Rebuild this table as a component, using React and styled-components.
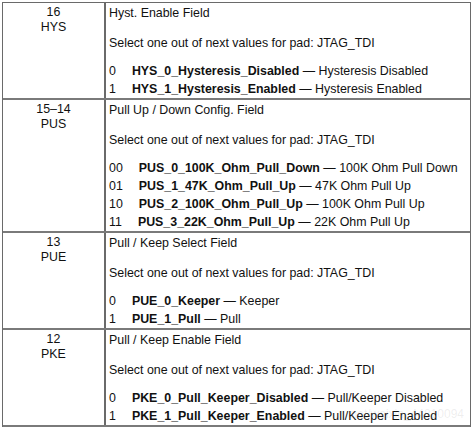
import React from 'react';
import styled, { createGlobalStyle } from 'styled-components';

const fields = [
  {
    bits: '16',
    name: 'HYS',
    title: 'Hyst. Enable Field',
    values: [
      { code: '0', key: 'HYS_0_Hysteresis_Disabled', desc: 'Hysteresis Disabled' },
      { code: '1', key: 'HYS_1_Hysteresis_Enabled', desc: 'Hysteresis Enabled' },
    ],
  },
  {
    bits: '15–14',
    name: 'PUS',
    title: 'Pull Up / Down Config. Field',
    values: [
      { code: '00', key: 'PUS_0_100K_Ohm_Pull_Down', desc: '100K Ohm Pull Down' },
      { code: '01', key: 'PUS_1_47K_Ohm_Pull_Up', desc: '47K Ohm Pull Up' },
      { code: '10', key: 'PUS_2_100K_Ohm_Pull_Up', desc: '100K Ohm Pull Up' },
      { code: '11', key: 'PUS_3_22K_Ohm_Pull_Up', desc: '22K Ohm Pull Up' },
    ],
  },
  {
    bits: '13',
    name: 'PUE',
    title: 'Pull / Keep Select Field',
    values: [
      { code: '0', key: 'PUE_0_Keeper', desc: 'Keeper' },
      { code: '1', key: 'PUE_1_Pull', desc: 'Pull' },
    ],
  },
  {
    bits: '12',
    name: 'PKE',
    title: 'Pull / Keep Enable Field',
    values: [
      { code: '0', key: 'PKE_0_Pull_Keeper_Disabled', desc: 'Pull/Keeper Disabled' },
      { code: '1', key: 'PKE_1_Pull_Keeper_Enabled', desc: 'Pull/Keeper Enabled' },
    ],
  },
];

export default function App() {
  return (
    <>
      <GlobalStyle />
      <Table>
        {fields.map((f) => (
          <Row key={f.name}>
            <FieldCell>
              <div>{f.bits}</div>
              <div>{f.name}</div>
            </FieldCell>
            <DescCell>
              <Title>{f.title}</Title>
              <Select>Select one out of next values for pad: JTAG_TDI</Select>
              <ValueList>
                {f.values.map((v) => (
                  <ValueRow key={v.code}>
                    <span>{v.code}</span>
                    <span>
                      <b>{v.key}</b> — {v.desc}
                    </span>
                  </ValueRow>
                ))}
              </ValueList>
            </DescCell>
          </Row>
        ))}
        <Watermark>net/weixin_44810094</Watermark>
      </Table>
    </>
  );
}

const GlobalStyle = createGlobalStyle`
  body {
    margin: 0;
    background: #fff;
    font-family: "Liberation Sans", Arial, sans-serif;
    color: #111;
  }
`;

const Table = styled.div`
  position: relative;
  margin: 2px 0 0 2px;
  width: 467px;
  border: 1px solid #6a6a6a;
  border-bottom: none;
  font-size: 12.4px;
`;

const Row = styled.div`
  display: grid;
  grid-template-columns: 103px 1fr;
  border-bottom: 2px solid #7a7a7a;
`;

const FieldCell = styled.div`
  border-right: 2px solid #6a6a6a;
  text-align: center;
  line-height: 15px;
  padding-top: 2px;
`;

const DescCell = styled.div`
  padding: 1px 0 0 3px;
  line-height: 18px;
`;

const Title = styled.div``;

const Select = styled.div`
  margin-top: 12px;
`;

const ValueList = styled.div`
  margin-top: 10px;
`;

const ValueRow = styled.div`
  display: flex;
  gap: 16px;
  white-space: nowrap;

  b {
    font-weight: bold;
  }
`;

const Watermark = styled.div`
  position: absolute;
  right: 6px;
  bottom: 6px;
  font-size: 12px;
  color: rgba(150, 150, 150, 0.16);
  pointer-events: none;
`;
